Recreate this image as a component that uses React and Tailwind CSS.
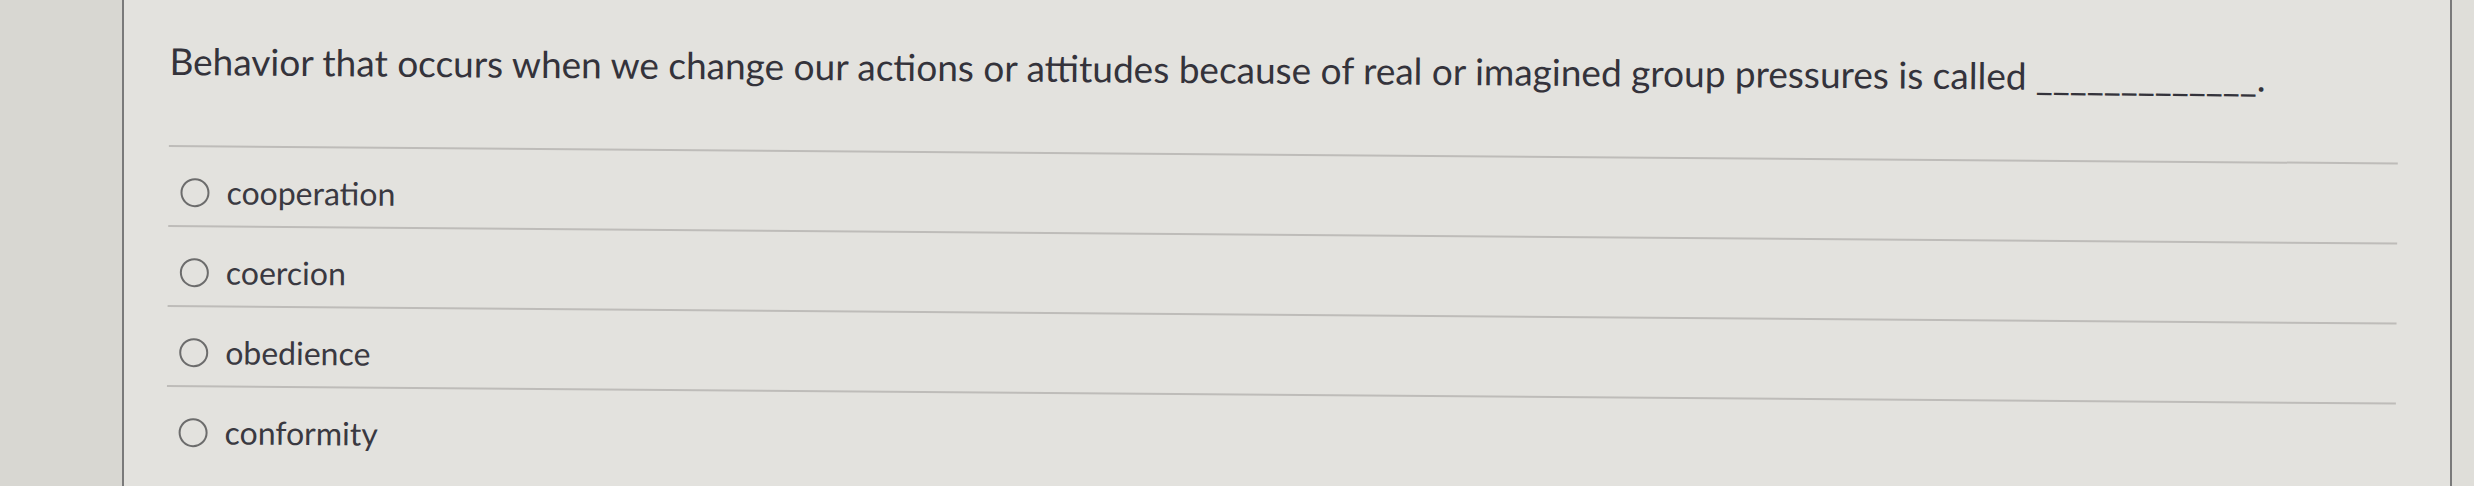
import React from "react";

const options = ["cooperation", "coercion", "obedience", "conformity"];

export default function App() {
  return (
    <div
      className="flex h-[486px] w-full overflow-hidden bg-[#e2e1dd]"
      style={{ fontFamily: "Lato, 'Open Sans', sans-serif" }}
    >
      <div className="w-[124px] shrink-0 border-r-2 border-[#7a7a7a] bg-[#d8d7d2]" />
      <div className="flex-1 overflow-hidden bg-[#e3e2de] pl-[46px] pr-[51px]">
        <div className="origin-top-left rotate-[0.45deg]">
          <p className="pt-[39px] text-[37px] leading-[44px] text-[#34333b] whitespace-nowrap">
            Behavior that occurs when we change our actions or attitudes because of real or imagined group pressures is called _____________.
          </p>
          <ul className="mt-[62px]">
            {options.map((o) => (
              <li
                key={o}
                className="flex h-[80px] items-start border-t-2 border-[#bebcb9] pt-[12px]"
              >
                <div className="flex h-[66px] items-center">
                  <span className="ml-[12px] h-[29px] w-[29px] shrink-0 rounded-full border-2 border-[#6c6c6c]" />
                  <span className="ml-[17px] text-[32px] leading-[38px] text-[#3a3941]">
                    {o}
                  </span>
                </div>
              </li>
            ))}
          </ul>
        </div>
      </div>
      <div className="w-[24px] shrink-0 border-l-2 border-[#7a7a7a] bg-[#dfded9]" />
    </div>
  );
}
